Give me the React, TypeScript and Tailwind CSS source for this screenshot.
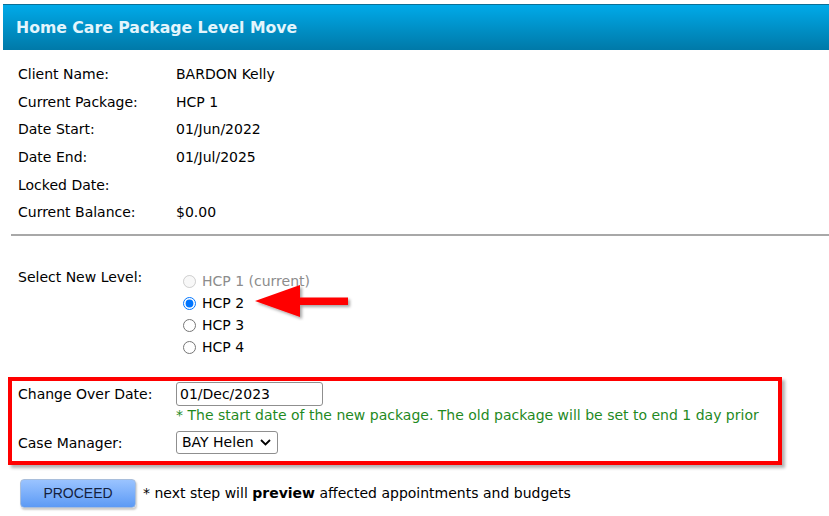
import React from 'react'

const info = [
  ['Client Name:', 'BARDON Kelly'],
  ['Current Package:', 'HCP 1'],
  ['Date Start:', '01/Jun/2022'],
  ['Date End:', '01/Jul/2025'],
  ['Locked Date:', ''],
  ['Current Balance:', '$0.00'],
]

const levels = ['HCP 1', 'HCP 2', 'HCP 3', 'HCP 4']

function Arrow() {
  return (
    <svg width="110" height="40" viewBox="0 0 110 40" className="absolute left-[248px] top-[281px] pointer-events-none">
      <defs>
        <filter id="sh" x="-20%" y="-30%" width="140%" height="160%">
          <feDropShadow dx="2" dy="2" stdDeviation="1.5" floodColor="#000" floodOpacity="0.35" />
        </filter>
      </defs>
      <path d="M7 20 L52 4 L52 16.5 L100 16.5 L100 24 L52 24 L52 36 Z" fill="#ff0000" filter="url(#sh)" />
    </svg>
  )
}

export default function App() {
  return (
    <div className="relative w-full h-[516px] bg-white text-[14px] text-black overflow-hidden" style={{ fontFamily: '"DejaVu Sans", Verdana, sans-serif' }}>
      <div className="ml-[3px] mt-[4px] h-[46px] border-t border-[#0b6f96] bg-gradient-to-b from-[#00aae9] to-[#0079a8] flex items-center px-[13px]">
        <h1 className="text-[15.7px] font-bold text-[#e4f5fc]">Home Care Package Level Move</h1>
      </div>

      <div className="pl-[18px] pt-[11px]">
        {info.map(([label, value]) => (
          <div key={label} className="grid grid-cols-[158px_1fr] h-[27.6px] items-center">
            <span>{label}</span>
            <span>{value}</span>
          </div>
        ))}
      </div>

      <div className="ml-[11px] mt-[7px] border-t-2 border-[#a8a8a8]" />

      <div className="pl-[18px] pt-[33px] grid grid-cols-[165px_1fr]">
        <span className="leading-[16px]">Select New Level:</span>
        <div className="flex flex-col mt-[2px]">
          {levels.map((lvl, i) => (
            <label key={lvl} className={`flex items-center h-[22px] gap-[6px] ${i === 0 ? 'text-[#8c8c8c]' : ''}`}>
              <input type="radio" name="level" disabled={i === 0} defaultChecked={i === 1} className="w-[13px] h-[13px] m-0" />
              <span>{i === 0 ? `${lvl} (current)` : lvl}</span>
            </label>
          ))}
        </div>
      </div>

      <div className="ml-[8px] mt-[18px] w-[774px] border-4 border-[#ff0000] shadow-[3px_3px_3px_rgba(0,0,0,0.3)] pl-[6px] pt-[1px] pb-[7px]">
        <div className="grid grid-cols-[158px_1fr]">
          <span className="pt-[2px]">Change Over Date:</span>
          <div>
            <input type="text" defaultValue="01/Dec/2023" className="w-[147px] h-[24px] border border-[#8f8f8f] rounded-[3px] px-[3px] text-[14px]" />
            <p className="text-[#1f8a1f] -mt-[1px]">* The start date of the new package. The old package will be set to end 1 day prior</p>
          </div>
        </div>
        <div className="grid grid-cols-[158px_1fr] mt-[5px]">
          <span className="pt-[2px]">Case Manager:</span>
          <div>
            <div className="inline-flex items-center h-[23px] border border-[#8f8f8f] rounded-[3px] pl-[5px] pr-[6px] gap-[6px]">
              <span>BAY Helen</span>
              <svg width="11" height="7" viewBox="0 0 11 7"><path d="M1 1 L5.5 5.5 L10 1" fill="none" stroke="#000" strokeWidth="1.8" /></svg>
            </div>
          </div>
        </div>
      </div>

      <div className="flex items-center pl-[20px] mt-[14px] gap-[7px]">
        <button className="w-[116px] h-[29px] rounded-[4px] border border-[#a9bedb] bg-gradient-to-b from-[#9ac3ff] to-[#5c9af5] shadow-[1px_2px_2px_rgba(0,0,0,0.2)] text-[14px] text-[#14213d]" style={{ fontFamily: '"Liberation Sans", Arial, sans-serif' }}>
          PROCEED
        </button>
        <span>* next step will <b>preview</b> affected appointments and budgets</span>
      </div>

      <Arrow />
    </div>
  )
}
